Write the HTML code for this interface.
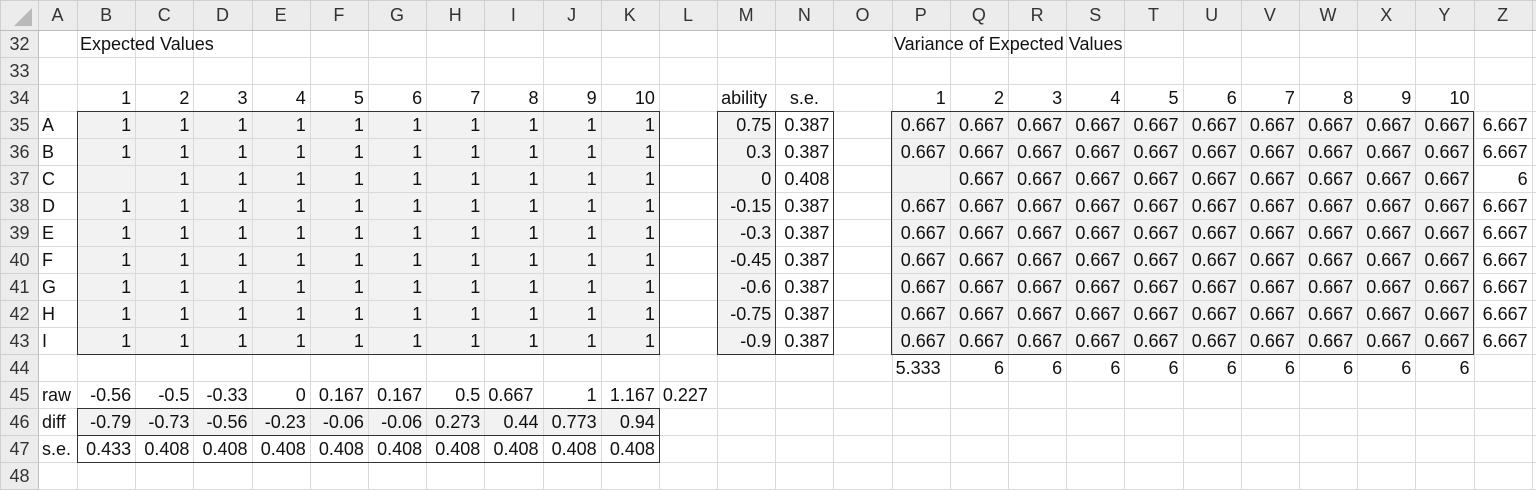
<!DOCTYPE html>
<html><head><meta charset="utf-8"><style>
body{margin:0;width:1536px;height:468px;overflow:hidden;background:#fff;font-family:"Liberation Sans",sans-serif;position:relative}
table{border-collapse:collapse;table-layout:fixed;position:absolute;left:0;top:0;width:1542px}
td,th{height:27px;border:1px solid #dadada;padding:0 4px 0 3px;font-size:18px;font-weight:normal;white-space:nowrap;overflow:hidden;color:#111;text-align:right;box-sizing:border-box}
thead th{height:30px;background:#ececec;color:#333;text-align:center;border-color:#d0d0d0;border-bottom:1px solid #bdbdbd}
tbody th{background:#ececec;color:#333;text-align:center;border-color:#d0d0d0;border-right:1px solid #bdbdbd;padding:0}
td.l{text-align:left}
td.g{background:#f2f2f2}
.box{position:absolute;border:1.5px solid #333;box-sizing:border-box;pointer-events:none}
.tri{position:absolute;left:14px;top:8px;width:0;height:0;border-left:18px solid transparent;border-bottom:18px solid #b9b9b9}
.t{position:absolute;font-size:18px;color:#111;white-space:nowrap}
</style></head><body>
<table>
<colgroup><col style="width:38px"><col style="width:39px">
<col style="width:58.2px"><col style="width:58.2px"><col style="width:58.2px"><col style="width:58.2px"><col style="width:58.2px"><col style="width:58.2px"><col style="width:58.2px"><col style="width:58.2px"><col style="width:58.2px"><col style="width:58.2px"><col style="width:58.2px"><col style="width:58.2px"><col style="width:58.2px"><col style="width:58.2px"><col style="width:58.2px"><col style="width:58.2px"><col style="width:58.2px"><col style="width:58.2px"><col style="width:58.2px"><col style="width:58.2px"><col style="width:58.2px"><col style="width:58.2px"><col style="width:58.2px"><col style="width:58.2px"><col style="width:58.2px"><col style="width:10px"></colgroup>
<thead><tr><th></th><th>A</th><th>B</th><th>C</th><th>D</th><th>E</th><th>F</th><th>G</th><th>H</th><th>I</th><th>J</th><th>K</th><th>L</th><th>M</th><th>N</th><th>O</th><th>P</th><th>Q</th><th>R</th><th>S</th><th>T</th><th>U</th><th>V</th><th>W</th><th>X</th><th>Y</th><th>Z</th><th></th></tr></thead>
<tbody>
<tr><th>32</th><td></td><td></td><td></td><td></td><td></td><td></td><td></td><td></td><td></td><td></td><td></td><td></td><td></td><td></td><td></td><td></td><td></td><td></td><td></td><td></td><td></td><td></td><td></td><td></td><td></td><td></td><td></td></tr>
<tr><th>33</th><td></td><td></td><td></td><td></td><td></td><td></td><td></td><td></td><td></td><td></td><td></td><td></td><td></td><td></td><td></td><td></td><td></td><td></td><td></td><td></td><td></td><td></td><td></td><td></td><td></td><td></td><td></td></tr>
<tr><th>34</th><td></td><td>1</td><td>2</td><td>3</td><td>4</td><td>5</td><td>6</td><td>7</td><td>8</td><td>9</td><td>10</td><td></td><td class="l">ability</td><td style="text-align:center">s.e.</td><td></td><td>1</td><td>2</td><td>3</td><td>4</td><td>5</td><td>6</td><td>7</td><td>8</td><td>9</td><td>10</td><td></td><td></td></tr>
<tr><th>35</th><td class="l">A</td><td class="g">1</td><td class="g">1</td><td class="g">1</td><td class="g">1</td><td class="g">1</td><td class="g">1</td><td class="g">1</td><td class="g">1</td><td class="g">1</td><td class="g">1</td><td></td><td class="g">0.75</td><td>0.387</td><td></td><td class="g">0.667</td><td class="g">0.667</td><td class="g">0.667</td><td class="g">0.667</td><td class="g">0.667</td><td class="g">0.667</td><td class="g">0.667</td><td class="g">0.667</td><td class="g">0.667</td><td class="g">0.667</td><td>6.667</td><td></td></tr>
<tr><th>36</th><td class="l">B</td><td class="g">1</td><td class="g">1</td><td class="g">1</td><td class="g">1</td><td class="g">1</td><td class="g">1</td><td class="g">1</td><td class="g">1</td><td class="g">1</td><td class="g">1</td><td></td><td class="g">0.3</td><td>0.387</td><td></td><td class="g">0.667</td><td class="g">0.667</td><td class="g">0.667</td><td class="g">0.667</td><td class="g">0.667</td><td class="g">0.667</td><td class="g">0.667</td><td class="g">0.667</td><td class="g">0.667</td><td class="g">0.667</td><td>6.667</td><td></td></tr>
<tr><th>37</th><td class="l">C</td><td class="g"></td><td class="g">1</td><td class="g">1</td><td class="g">1</td><td class="g">1</td><td class="g">1</td><td class="g">1</td><td class="g">1</td><td class="g">1</td><td class="g">1</td><td></td><td class="g">0</td><td>0.408</td><td></td><td class="g"></td><td class="g">0.667</td><td class="g">0.667</td><td class="g">0.667</td><td class="g">0.667</td><td class="g">0.667</td><td class="g">0.667</td><td class="g">0.667</td><td class="g">0.667</td><td class="g">0.667</td><td>6</td><td></td></tr>
<tr><th>38</th><td class="l">D</td><td class="g">1</td><td class="g">1</td><td class="g">1</td><td class="g">1</td><td class="g">1</td><td class="g">1</td><td class="g">1</td><td class="g">1</td><td class="g">1</td><td class="g">1</td><td></td><td class="g">-0.15</td><td>0.387</td><td></td><td class="g">0.667</td><td class="g">0.667</td><td class="g">0.667</td><td class="g">0.667</td><td class="g">0.667</td><td class="g">0.667</td><td class="g">0.667</td><td class="g">0.667</td><td class="g">0.667</td><td class="g">0.667</td><td>6.667</td><td></td></tr>
<tr><th>39</th><td class="l">E</td><td class="g">1</td><td class="g">1</td><td class="g">1</td><td class="g">1</td><td class="g">1</td><td class="g">1</td><td class="g">1</td><td class="g">1</td><td class="g">1</td><td class="g">1</td><td></td><td class="g">-0.3</td><td>0.387</td><td></td><td class="g">0.667</td><td class="g">0.667</td><td class="g">0.667</td><td class="g">0.667</td><td class="g">0.667</td><td class="g">0.667</td><td class="g">0.667</td><td class="g">0.667</td><td class="g">0.667</td><td class="g">0.667</td><td>6.667</td><td></td></tr>
<tr><th>40</th><td class="l">F</td><td class="g">1</td><td class="g">1</td><td class="g">1</td><td class="g">1</td><td class="g">1</td><td class="g">1</td><td class="g">1</td><td class="g">1</td><td class="g">1</td><td class="g">1</td><td></td><td class="g">-0.45</td><td>0.387</td><td></td><td class="g">0.667</td><td class="g">0.667</td><td class="g">0.667</td><td class="g">0.667</td><td class="g">0.667</td><td class="g">0.667</td><td class="g">0.667</td><td class="g">0.667</td><td class="g">0.667</td><td class="g">0.667</td><td>6.667</td><td></td></tr>
<tr><th>41</th><td class="l">G</td><td class="g">1</td><td class="g">1</td><td class="g">1</td><td class="g">1</td><td class="g">1</td><td class="g">1</td><td class="g">1</td><td class="g">1</td><td class="g">1</td><td class="g">1</td><td></td><td class="g">-0.6</td><td>0.387</td><td></td><td class="g">0.667</td><td class="g">0.667</td><td class="g">0.667</td><td class="g">0.667</td><td class="g">0.667</td><td class="g">0.667</td><td class="g">0.667</td><td class="g">0.667</td><td class="g">0.667</td><td class="g">0.667</td><td>6.667</td><td></td></tr>
<tr><th>42</th><td class="l">H</td><td class="g">1</td><td class="g">1</td><td class="g">1</td><td class="g">1</td><td class="g">1</td><td class="g">1</td><td class="g">1</td><td class="g">1</td><td class="g">1</td><td class="g">1</td><td></td><td class="g">-0.75</td><td>0.387</td><td></td><td class="g">0.667</td><td class="g">0.667</td><td class="g">0.667</td><td class="g">0.667</td><td class="g">0.667</td><td class="g">0.667</td><td class="g">0.667</td><td class="g">0.667</td><td class="g">0.667</td><td class="g">0.667</td><td>6.667</td><td></td></tr>
<tr><th>43</th><td class="l">I</td><td class="g">1</td><td class="g">1</td><td class="g">1</td><td class="g">1</td><td class="g">1</td><td class="g">1</td><td class="g">1</td><td class="g">1</td><td class="g">1</td><td class="g">1</td><td></td><td class="g">-0.9</td><td>0.387</td><td></td><td class="g">0.667</td><td class="g">0.667</td><td class="g">0.667</td><td class="g">0.667</td><td class="g">0.667</td><td class="g">0.667</td><td class="g">0.667</td><td class="g">0.667</td><td class="g">0.667</td><td class="g">0.667</td><td>6.667</td><td></td></tr>
<tr><th>44</th><td></td><td></td><td></td><td></td><td></td><td></td><td></td><td></td><td></td><td></td><td></td><td></td><td></td><td></td><td></td><td class="l">5.333</td><td>6</td><td>6</td><td>6</td><td>6</td><td>6</td><td>6</td><td>6</td><td>6</td><td>6</td><td></td><td></td></tr>
<tr><th>45</th><td class="l">raw</td><td>-0.56</td><td>-0.5</td><td>-0.33</td><td>0</td><td>0.167</td><td>0.167</td><td>0.5</td><td class="l">0.667</td><td>1</td><td>1.167</td><td class="l">0.227</td><td></td><td></td><td></td><td></td><td></td><td></td><td></td><td></td><td></td><td></td><td></td><td></td><td></td><td></td><td></td></tr>
<tr><th>46</th><td class="l">diff</td><td class="g">-0.79</td><td class="g">-0.73</td><td class="g">-0.56</td><td class="g">-0.23</td><td class="g">-0.06</td><td class="g">-0.06</td><td class="g">0.273</td><td class="g">0.44</td><td class="g">0.773</td><td class="g">0.94</td><td></td><td></td><td></td><td></td><td></td><td></td><td></td><td></td><td></td><td></td><td></td><td></td><td></td><td></td><td></td><td></td></tr>
<tr><th>47</th><td class="l">s.e.</td><td>0.433</td><td>0.408</td><td>0.408</td><td>0.408</td><td>0.408</td><td>0.408</td><td>0.408</td><td>0.408</td><td>0.408</td><td>0.408</td><td></td><td></td><td></td><td></td><td></td><td></td><td></td><td></td><td></td><td></td><td></td><td></td><td></td><td></td><td></td><td></td></tr>
<tr><th>48</th><td></td><td></td><td></td><td></td><td></td><td></td><td></td><td></td><td></td><td></td><td></td><td></td><td></td><td></td><td></td><td></td><td></td><td></td><td></td><td></td><td></td><td></td><td></td><td></td><td></td><td></td><td></td></tr>
</tbody></table>
<div class="t" style="left:80px;top:34px">Expected Values</div>
<div class="t" style="left:894px;top:34px">Variance of Expected Values</div>
<div class="tri"></div>
<div class="box" style="left:77px;top:111px;width:583px;height:244px"></div>
<div class="box" style="left:717px;top:111px;width:59px;height:244px"></div>
<div class="box" style="left:775px;top:111px;width:59px;height:244px"></div>
<div class="box" style="left:891px;top:111px;width:583px;height:244px"></div>
<div class="box" style="left:77px;top:408px;width:583px;height:28px"></div>
<div class="box" style="left:77px;top:435px;width:583px;height:28px"></div>
</body></html>
